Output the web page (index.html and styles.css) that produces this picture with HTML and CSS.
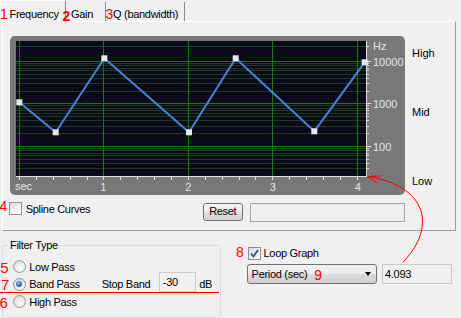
FILE: index.html
```html
<!DOCTYPE html>
<html>
<head>
<meta charset="utf-8">
<link rel="stylesheet" href="styles.css">
</head>
<body>
<div class="app">
  <div class="tabs">
    <div class="tab tab-active">Frequency</div>
    <div class="tab tab-gain">Gain</div>
    <div class="tab tab-q">Q (bandwidth)</div>
  </div>
  <div class="panel">
    <div class="graph-row">
      <svg class="graph" width="395" height="159" viewBox="10 36 395 159">
        <rect x="10" y="36" width="395" height="159" rx="5" fill="#787878"/>
        <rect x="16" y="41" width="351" height="135" fill="#0a0a18"/>
        <path class="minor" d="M16 168.5H366M16 163.5H366M16 159.5H366M16 155.5H366M16 153.5H366M16 150.5H366M16 148.5H366M16 133.5H366M16 126.5H366M16 120.5H366M16 116.5H366M16 113.5H366M16 110.5H366M16 108.5H366M16 105.5H366M16 91.5H366M16 83.5H366M16 78.5H366M16 74.5H366M16 70.5H366M16 68.5H366M16 65.5H366M16 63.5H366M16 46.5H366"/>
        <path class="major" d="M16 146.5H366M16 103.5H366M16 61.5H366M19.5 41V176M103.5 41V176M188.5 41V176M272.5 41V176M357.5 41V176"/>
        <path class="axis" d="M16 176.5H367.5M366.5 41V177"/>
        <path class="axis" d="M19.5 177V180M36.5 177V180M53.5 177V180M70.5 177V180M87.5 177V180M103.5 177V180M120.5 177V180M137.5 177V180M154.5 177V180M171.5 177V180M188.5 177V180M205.5 177V180M222.5 177V180M239.5 177V180M255.5 177V180M272.5 177V180M289.5 177V180M306.5 177V180M323.5 177V180M340.5 177V180M357.5 177V180"/>
        <path class="axis" d="M367 168.5H369M367 163.5H369M367 159.5H369M367 155.5H369M367 153.5H369M367 150.5H369M367 148.5H369M367 146.5H371M367 133.5H369M367 126.5H369M367 120.5H369M367 116.5H369M367 113.5H369M367 110.5H369M367 108.5H369M367 105.5H369M367 103.5H371M367 91.5H369M367 83.5H369M367 78.5H369M367 74.5H369M367 70.5H369M367 68.5H369M367 65.5H369M367 63.5H369M367 61.5H371M367 46.5H369"/>
        <text x="373" y="49.6">Hz</text>
        <text x="373" y="66.2">10000</text>
        <text x="373" y="108">1000</text>
        <text x="373" y="151.2">100</text>
        <text x="15" y="190">sec</text>
        <text x="103.3" y="190.5" text-anchor="middle">1</text>
        <text x="188.3" y="190.5" text-anchor="middle">2</text>
        <text x="272.7" y="190.5" text-anchor="middle">3</text>
        <text x="357.7" y="190.5" text-anchor="middle">4</text>
        <polyline class="curve" points="19.3,102.3 55.7,132.3 104.3,58.3 189,132.3 235.7,58.3 314.3,131.3 364.7,62.3"/>
        <g class="pts">
          <rect x="16.3" y="99.3" width="6" height="6"/>
          <rect x="52.7" y="129.3" width="6" height="6"/>
          <rect x="101.3" y="55.3" width="6" height="6"/>
          <rect x="186" y="129.3" width="6" height="6"/>
          <rect x="232.7" y="55.3" width="6" height="6"/>
          <rect x="311.3" y="128.3" width="6" height="6"/>
          <rect x="361.7" y="59.3" width="6" height="6"/>
        </g>
      </svg>
      <div class="levels">
        <span class="lv-high">High</span>
        <span class="lv-mid">Mid</span>
        <span class="lv-low">Low</span>
      </div>
    </div>
    <div class="controls">
      <div class="check check-spline"><span class="box"></span><span class="check-label">Spline Curves</span></div>
      <div class="btn">Reset</div>
      <div class="textbox"></div>
    </div>
  </div>
  <div class="bottom">
    <fieldset class="filter">
      <legend>Filter Type</legend>
      <div class="radios">
        <div class="radio-row"><span class="radio"></span><span class="radio-label">Low Pass</span></div>
        <div class="radio-row"><span class="radio radio-on"></span><span class="radio-label">Band Pass</span><span class="stop-label">Stop Band</span><span class="db-box">-30</span><span class="db">dB</span></div>
        <div class="radio-row"><span class="radio"></span><span class="radio-label">High Pass</span></div>
      </div>
    </fieldset>
    <div class="loop">
      <div class="check check-loop"><span class="box box-checked"><svg width="11" height="11" viewBox="0 0 11 11"><path d="M2 5.5L4.5 8.5L9 2" fill="none" stroke="#3d4c8e" stroke-width="1.8"/></svg></span><span class="check-label">Loop Graph</span></div>
      <div class="loop-row">
        <div class="select"><span>Period (sec)</span><span class="arrow"></span></div>
        <div class="value">4.093</div>
      </div>
    </div>
  </div>

  <svg class="annot" width="461" height="318" viewBox="0 0 461 318">
    <path d="M367 176.5C395 180 423 195 422.5 222C422 240 412 252 403 262.5" />
    <path d="M367 176.5L382 176M367 176.5L377 182.5" />
    <path d="M0 292.5H219" />
  </svg>
  <span class="mark m1">1</span>
  <span class="mark m2">2</span>
  <span class="mark m3">3</span>
  <span class="mark m4">4</span>
  <span class="mark m5">5</span>
  <span class="mark m7">7</span>
  <span class="mark m6">6</span>
  <span class="mark m8">8</span>
  <span class="mark m9">9</span>
</div>
</body>
</html>
```

FILE: styles.css
```css
body {
  margin: 0;
  background: #f0f0f0;
  font-family: "Liberation Sans", Arial, sans-serif;
  font-size: 11px;
  letter-spacing: -0.3px;
  color: #000;
}

.app {
  position: relative;
  width: 461px;
  height: 318px;
  overflow: hidden;
}

/* tabs */
.tabs {
  display: flex;
  height: 21px;
}
.tab {
  box-sizing: border-box;
  line-height: 13px;
  white-space: nowrap;
  border-right: 1px solid #8c8c8c;
}
.tab-active {
  width: 66px;
  height: 22px;
  padding: 7px 0 0 8.5px;
  border-left: 1px solid #fff;
  border-top: 1px solid #fff;
  background: #f0f0f0;
}
.tab-gain {
  width: 40px;
  height: 19px;
  margin-top: 2px;
  padding: 6px 0 0 5px;
}
.tab-q {
  width: 79px;
  height: 19px;
  margin-top: 2px;
  padding: 6px 0 0 7px;
}

/* panel */
.panel {
  box-sizing: border-box;
  margin-left: 2px;
  width: 454px;
  height: 210px;
  border-left: 1px solid #fff;
  border-top: 1px solid #fff;
  border-right: 1px solid #a0a0a0;
  border-bottom: 1px solid #a0a0a0;
}
.graph-row {
  display: flex;
  margin: 14px 0 0 7px;
}
.graph {
  display: block;
  flex: none;
}
.graph text {
  font-family: "Liberation Sans", Arial, sans-serif;
  font-size: 11px;
  letter-spacing: 0;
  fill: #e6e6e6;
}
.graph .minor {
  stroke: #1e3b1e;
  stroke-width: 1;
  fill: none;
}
.graph .major {
  stroke: #107a10;
  stroke-width: 1;
  fill: none;
}
.graph .axis {
  stroke: #e2e2e2;
  stroke-width: 1;
  fill: none;
}
.graph .curve {
  fill: none;
  stroke: #4a7fda;
  stroke-width: 2;
  stroke-linejoin: round;
}
.graph .pts rect {
  fill: #e6e6ee;
}

.levels {
  display: flex;
  flex-direction: column;
  margin-left: 7px;
  line-height: 13px;
  letter-spacing: 0;
}
.lv-high { margin-top: 10.9px; }
.lv-mid { margin-top: 46.2px; }
.lv-low { margin-top: 55.5px; }

/* controls row */
.controls {
  display: flex;
  align-items: flex-start;
  margin-top: 7px;
}
.check {
  display: flex;
  align-items: center;
  height: 13px;
}
.check-spline {
  margin-left: 6px;
  width: 194px;
}
.box {
  box-sizing: border-box;
  width: 13px;
  height: 13px;
  border: 1px solid #8e8f8f;
  background: linear-gradient(135deg, #dcdcdc 0%, #f2f2f2 60%, #fafafa 100%);
  display: flex;
  align-items: center;
  justify-content: center;
  flex: none;
}
.box-checked {
  background: linear-gradient(135deg, #d6dae6 0%, #eef0f6 60%, #fafafa 100%);
}
.box svg { display: block; }
.check-spline .check-label { margin-left: 3.7px; }
.check-loop .check-label { margin-left: 2.5px; }

.btn {
  box-sizing: border-box;
  width: 39.5px;
  height: 17.5px;
  margin-top: 1.3px;
  border: 1px solid #707070;
  border-radius: 3px;
  background: linear-gradient(#f4f4f4 0%, #ececec 50%, #dedede 50%, #d2d2d2 100%);
  text-align: center;
  line-height: 15px;
}
.textbox {
  box-sizing: border-box;
  width: 154.7px;
  height: 19px;
  margin: 0.7px 0 0 7.5px;
  border: 1.5px solid #a6a6a6;
  background: #f0f0f0;
}

/* bottom section */
.bottom {
  display: flex;
  margin-top: 8px;
}
.filter {
  box-sizing: border-box;
  margin: 0 0 0 2px;
  padding: 0 0 0 5px;
  width: 219px;
  height: 79px;
  border: 1px solid #d5dfe5;
  border-radius: 3px;
  min-width: 0;
}
.filter legend {
  padding: 0 2px;
  line-height: 13px;
}
.radios {
  margin-top: 6px;
}
.radio-row {
  display: flex;
  align-items: center;
  height: 17.5px;
  padding-left: 4.5px;
}
.radio {
  box-sizing: border-box;
  width: 13px;
  height: 13px;
  border-radius: 50%;
  border: 1px solid #959595;
  background: radial-gradient(circle at 60% 65%, #fbfbfb 0%, #eaeaea 45%, #cfcfcf 100%);
  flex: none;
  display: flex;
  align-items: center;
  justify-content: center;
}
.radio-on::after {
  content: "";
  width: 6px;
  height: 6px;
  border-radius: 50%;
  background: radial-gradient(circle at 40% 35%, #9cc4ef 0%, #3a74c4 45%, #173f86 100%);
}
.radio-label {
  margin-left: 3.8px;
  width: 72.4px;
  white-space: nowrap;
}
.stop-label {
  width: 57.6px;
  white-space: nowrap;
}
.db-box {
  box-sizing: border-box;
  align-self: flex-start;
  margin-top: -3.5px;
  width: 37px;
  height: 20px;
  border: 1px solid #cbcbcb;
  background: #f0f0f0;
  padding: 3px 0 0 2.5px;
  line-height: 13px;
}
.db {
  margin-left: 3px;
}

.loop {
  margin-left: 26px;
  padding-top: 7.5px;
}
.check-loop {
  margin-left: 1px;
}
.loop-row {
  display: flex;
  align-items: flex-start;
  margin-top: 4.8px;
}
.select {
  box-sizing: border-box;
  width: 130.4px;
  height: 20px;
  border: 1px solid #707070;
  border-radius: 3px;
  background: linear-gradient(#f2f2f2 0%, #ebebeb 50%, #dddddd 50%, #cfcfcf 100%);
  display: flex;
  align-items: center;
  justify-content: space-between;
  padding: 0 5px 0 3.6px;
  line-height: 13px;
}
.arrow {
  width: 0;
  height: 0;
  border-left: 3.5px solid transparent;
  border-right: 3.5px solid transparent;
  border-top: 4px solid #000;
}
.value {
  box-sizing: border-box;
  width: 70.4px;
  height: 19.3px;
  margin-left: 4.6px;
  border: 1px solid #c9c9c9;
  background: #f0f0f0;
  padding: 2.5px 0 0 2px;
  line-height: 13px;
}

/* red annotations (overlay) */
.annot {
  position: absolute;
  left: 0;
  top: 0;
  pointer-events: none;
}
.annot path {
  fill: none;
  stroke: #f00;
  stroke-width: 1;
}
.mark {
  position: absolute;
  z-index: 2;
  color: #f00;
  line-height: 1;
  letter-spacing: 0;
  font-family: "Liberation Sans", Arial, sans-serif;
}
.m1 { left: 0; top: 7.2px; font-size: 14px; }
.m2 { left: 62.5px; top: 9.2px; font-size: 14px; font-weight: bold; }
.m3 { left: 105.5px; top: 7.2px; font-size: 14px; }
.m4 { left: -0.5px; top: 198.5px; font-size: 14px; }
.m5 { left: 0.3px; top: 260px; font-size: 15px; }
.m7 { left: 1px; top: 277.3px; font-size: 15px; }
.m6 { left: -0.6px; top: 294.7px; font-size: 15px; }
.m8 { left: 236px; top: 244.9px; font-size: 14px; }
.m9 { left: 314.3px; top: 268.2px; font-size: 14px; }
```
